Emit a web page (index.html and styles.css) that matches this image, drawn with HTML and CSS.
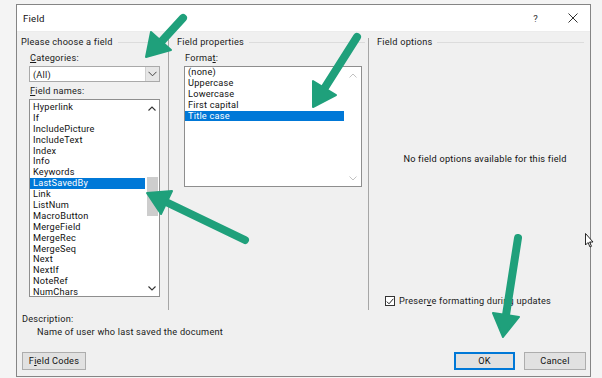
FILE: index.html
```html
<!DOCTYPE html>
<html>
<head>
<meta charset="utf-8">
<link rel="stylesheet" href="styles.css">
</head>
<body>
<div class="dialog">
  <div class="titlebar">
    <span class="title">Field</span>
    <span class="tb-btns">
      <span class="help">?</span>
      <svg class="close" width="10" height="10" viewBox="0 0 10 10"><path d="M0.5 0.5 L9.5 9.5 M9.5 0.5 L0.5 9.5" stroke="#333" stroke-width="1" fill="none"/></svg>
    </span>
  </div>
  <div class="body">
    <div class="panes">
      <section class="pane pane-choose">
        <div class="group-head"><span>Please choose a field</span></div>
        <div class="label"><u>C</u>ategories:</div>
        <div class="combo">
          <span class="combo-value">(All)</span>
          <span class="combo-btn"><svg width="9" height="6" viewBox="0 0 9 6"><path d="M0.5 0.8 L4.5 4.8 L8.5 0.8" stroke="#444" stroke-width="1" fill="none"/></svg></span>
        </div>
        <div class="label label-names"><u>F</u>ield names:</div>
        <div class="listbox names">
          <ul class="items">
            <li>Hyperlink</li>
            <li>If</li>
            <li>IncludePicture</li>
            <li>IncludeText</li>
            <li>Index</li>
            <li>Info</li>
            <li>Keywords</li>
            <li class="sel">LastSavedBy</li>
            <li>Link</li>
            <li>ListNum</li>
            <li>MacroButton</li>
            <li>MergeField</li>
            <li>MergeRec</li>
            <li>MergeSeq</li>
            <li>Next</li>
            <li>NextIf</li>
            <li>NoteRef</li>
            <li>NumChars</li>
          </ul>
          <div class="scrollbar">
            <span class="sb-btn"><svg width="8" height="5" viewBox="0 0 8 5"><path d="M0.5 4.5 L4 1 L7.5 4.5" stroke="#333" stroke-width="1.1" fill="none"/></svg></span>
            <span class="sb-space"></span>
            <span class="sb-thumb"></span>
            <span class="sb-fill"></span>
            <span class="sb-btn"><svg width="8" height="5" viewBox="0 0 8 5"><path d="M0.5 0.5 L4 4 L7.5 0.5" stroke="#333" stroke-width="1.1" fill="none"/></svg></span>
          </div>
        </div>
      </section>
      <div class="vsep"></div>
      <section class="pane pane-props">
        <div class="group-head"><span>Field properties</span></div>
        <div class="label label-format">Forma<u>t</u>:</div>
        <div class="listbox format">
          <ul class="items">
            <li>(none)</li>
            <li>Uppercase</li>
            <li>Lowercase</li>
            <li>First capital</li>
            <li class="sel">Title case</li>
          </ul>
          <div class="scrollbar scrollbar-off">
            <span class="sb-btn"><svg width="8" height="5" viewBox="0 0 8 5"><path d="M0.5 4.5 L4 1 L7.5 4.5" stroke="#c2c2c2" stroke-width="1" fill="none"/></svg></span>
            <span class="sb-fill"></span>
            <span class="sb-btn"><svg width="8" height="5" viewBox="0 0 8 5"><path d="M0.5 0.5 L4 4 L7.5 0.5" stroke="#c2c2c2" stroke-width="1" fill="none"/></svg></span>
          </div>
        </div>
      </section>
      <div class="vsep"></div>
      <section class="pane pane-options">
        <div class="group-head"><span>Field options</span></div>
        <div class="no-options">No field options available for this field</div>
        <label class="check-row">
          <span class="checkbox"><svg width="8" height="7" viewBox="0 0 8 7"><path d="M0.8 3.6 L3 5.8 L7.3 0.8" stroke="#222" stroke-width="1" fill="none"/></svg></span>
          <span>Preser<u>v</u>e formatting during updates</span>
        </label>
      </section>
    </div>
    <div class="description">
      <div class="desc-label">Description:</div>
      <div class="desc-text">Name of user who last saved the document</div>
    </div>
    <div class="footer">
      <button class="btn btn-codes">F<u>i</u>eld Codes</button>
      <div class="footer-right">
        <button class="btn btn-ok">OK</button>
        <button class="btn btn-cancel">Cancel</button>
      </div>
    </div>
  </div>
</div>

<svg class="overlay" width="602" height="378" viewBox="0 0 602 378">
  <g fill="#1fa07b" stroke="#1fa07b" stroke-linecap="round" stroke-linejoin="round">
    <line x1="183" y1="18" x2="161" y2="42" stroke-width="8"/>
    <polygon points="146,57 171,50 151,32" stroke-width="2"/>
    <line x1="357" y1="37" x2="324" y2="89" stroke-width="8"/>
    <polygon points="313,107 336,95 313,81" stroke-width="2"/>
    <line x1="245" y1="240" x2="166" y2="202" stroke-width="8"/>
    <polygon points="147,193 172,191 161,214" stroke-width="2"/>
    <line x1="518" y1="238" x2="506" y2="315" stroke-width="8"/>
    <polygon points="503,337 519,317 493,313" stroke-width="2"/>
  </g>
  <path d="M585.5 233.5 L585.5 245 L588 242.5 L590 247 L591.5 246.3 L589.6 242 L593 242 Z" fill="#fff" stroke="#111" stroke-width="0.9"/>
</svg>
</body>
</html>
```
FILE: styles.css
```css
* { box-sizing: border-box; }
html, body { margin: 0; padding: 0; }
body {
  width: 602px;
  height: 378px;
  overflow: hidden;
  position: relative;
  background: #f4f4f4;
  font-family: Roboto, "Noto Sans", sans-serif;
  font-size: 9.2px;
  letter-spacing: 0.22px;
  color: #1a1a1a;
}
u { text-decoration: underline; text-underline-offset: 1px; }

.dialog {
  margin: 4px 0 0 16px;
  width: 575px;
  height: 373px;
  border: 1px solid #858585;
  background: #f0f0f0;
  display: flex;
  flex-direction: column;
}

.titlebar {
  height: 27px;
  flex: none;
  background: #fff;
  display: flex;
  align-items: center;
  justify-content: space-between;
  padding: 0 12px 0 6px;
  border-bottom: 1px solid #ececec;
}
.title { font-size: 9.6px; color: #111; }
.tb-btns { display: flex; align-items: center; gap: 30px; }
.help { font-size: 9.6px; color: #333; }
.close { display: block; }

.body {
  flex: 1;
  display: flex;
  flex-direction: column;
  padding: 4px 3px 6px 4px;
}

.panes {
  display: flex;
  height: 274px;
  flex: none;
}
.pane { display: flex; flex-direction: column; }
.pane-choose { width: 147px; }
.pane-props { width: 199px; padding-left: 8px; }
.pane-options { width: 218px; padding-left: 8px; }

.vsep {
  width: 1px;
  background: #a6a6a6;
  margin-top: 2px;
  flex: none;
}

.group-head {
  display: flex;
  align-items: center;
  height: 12px;
  line-height: 12px;
  white-space: nowrap;
  color: #1a1a1a;
}
.group-head::after {
  content: "";
  flex: 1;
  height: 1px;
  background: #dcdcdc;
  margin: 0 3px 0 5px;
}

.label { line-height: 12px; margin-top: 4px; }
.pane-choose .label { padding-left: 9px; }
.label-names { margin-top: 3px; }
.label-format { padding-left: 8px; }

.combo {
  margin: 2px 0 0 8px;
  width: 131px;
  height: 16px;
  background: #fff;
  border: 1px solid #a9a9a9;
  display: flex;
  align-items: center;
  justify-content: space-between;
}
.combo-value { padding-left: 3px; }
.combo-btn {
  width: 14px;
  height: 14px;
  background: #e6e6e6;
  border-left: 1px solid #d0d0d0;
  display: flex;
  align-items: center;
  justify-content: center;
}

.listbox {
  background: #fff;
  border: 1px solid #8e8e8e;
  display: flex;
}
.names {
  margin: 2px 0 0 8px;
  width: 131px;
  height: 198px;
}
.format {
  margin: 2px 0 0 7px;
  width: 178px;
  height: 121px;
}
.items {
  list-style: none;
  margin: 0;
  padding: 0;
  flex: 1;
  color: #111;
}
.names .items { padding-top: 2px; }
.items li {
  height: 10.9px;
  line-height: 10.9px;
  padding-left: 3px;
  white-space: nowrap;
}
.items li.sel { background: #0078d7; color: #fff; }

.scrollbar {
  width: 14px;
  display: flex;
  flex-direction: column;
  align-items: center;
}
.format .scrollbar { width: 17px; }
.sb-btn {
  height: 16px;
  width: 100%;
  display: flex;
  align-items: center;
  justify-content: center;
  flex: none;
}
.sb-space { height: 61px; flex: none; }
.sb-thumb { height: 39px; width: 11px; background: #cdcdcd; flex: none; }
.sb-fill { flex: 1; }

.no-options {
  margin-top: 105px;
  padding-left: 6px;
  text-align: center;
  line-height: 12px;
  color: #111;
}
.check-row {
  margin-top: auto;
  margin-bottom: 3px;
  padding-left: 8px;
  display: flex;
  align-items: center;
  gap: 4px;
  line-height: 12px;
}
.checkbox {
  width: 10px;
  height: 10px;
  border: 1px solid #333;
  background: #fff;
  display: flex;
  align-items: center;
  justify-content: center;
}

.description { margin-top: 3px; padding-left: 1px; }
.desc-label, .desc-text { line-height: 12px; }
.desc-text { padding-left: 15px; margin-top: 1px; }

.footer {
  margin-top: auto;
  display: flex;
  justify-content: space-between;
  align-items: flex-end;
}
.footer-right { display: flex; gap: 9px; padding-right: 1px; }
.btn {
  font-family: inherit;
  font-size: 9.2px;
  letter-spacing: 0.22px;
  color: #111;
  height: 18px;
  padding: 0;
  background: #e1e1e1;
  border: 1px solid #adadad;
  line-height: 16px;
}
.btn-codes { width: 64px; margin-left: 1px; }
.btn-ok { width: 61px; border-color: #0078d7; box-shadow: inset 0 0 0 1px #0078d7; }
.btn-cancel { width: 62px; }

.overlay {
  position: absolute;
  left: 0;
  top: 0;
  pointer-events: none;
}
```
